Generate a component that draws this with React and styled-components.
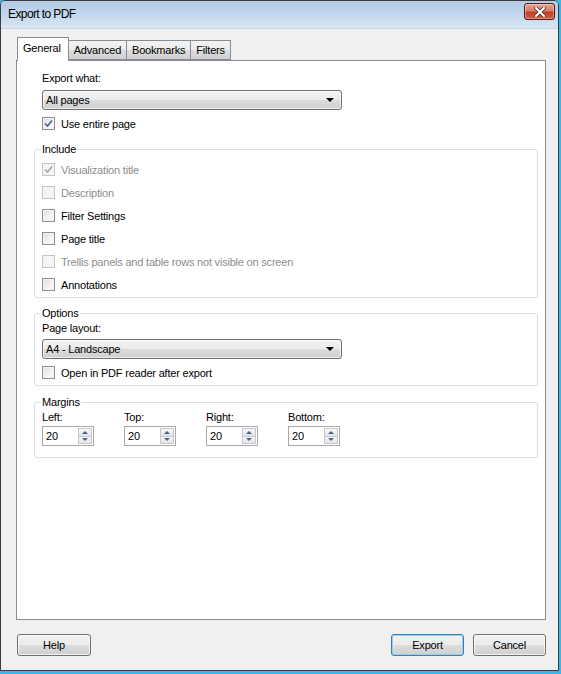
import React from "react";
import styled, { createGlobalStyle } from "styled-components";

const GlobalStyle = createGlobalStyle`
    html, body {
        margin: 0;
        padding: 0;
        background: #f0f0f0;
    }
    body {
        font-family: "Liberation Sans", Arial, sans-serif;
        font-size: 11px;
        letter-spacing: -0.2px;
        color: #000;
    }
`;

const Screen = styled.div`
    width: 561px;
    height: 674px;
    box-sizing: border-box;
    padding: 0 2px 3px 0;
    background: #3ab7e6;
`;

const Window = styled.div`
    height: 100%;
    box-sizing: border-box;
    border: 1px solid #3c3c3c;
    border-radius: 5px 5px 0 0;
    background: #f0f0f0;
    display: flex;
    flex-direction: column;
    overflow: hidden;
`;

const TitleBar = styled.div`
    height: 27px;
    flex: none;
    display: flex;
    align-items: center;
    justify-content: space-between;
    padding: 0 3px 0 7px;
    background: linear-gradient(180deg, #b3cbe6 0%, #c5d8ee 55%, #d9e6f4 100%);
    border-bottom: 1px solid #c9d6e4;
`;

const Title = styled.span`
    font-size: 12px;
    letter-spacing: -0.6px;
    color: #000;
    margin-top: -1px;
`;

const CloseButton = styled.div`
    width: 29px;
    height: 15px;
    margin-top: -6px;
    border: 1px solid #4f1a12;
    border-radius: 3px;
    display: flex;
    align-items: center;
    justify-content: center;
    background: linear-gradient(180deg, #eaa898 0%, #d97a64 45%, #c2402a 55%, #cf5e44 100%);
    box-shadow: inset 0 0 0 1px rgba(255, 255, 255, 0.35);
`;

const Body = styled.div`
    flex: 1;
    display: flex;
    flex-direction: column;
    padding: 8px 12px 0 15px;
    min-height: 0;
`;

const TabRow = styled.div`
    display: flex;
    align-items: flex-end;
    padding-left: 1px;
    position: relative;
    z-index: 1;
`;

const Tab = styled.div`
    box-sizing: border-box;
    height: ${(props) => (props.active ? "24px" : "20px")};
    padding: ${(props) => (props.active ? "0 7px 3px 5px" : "0 5px")};
    margin-bottom: ${(props) => (props.active ? "-1px" : "0")};
    margin-left: ${(props) => (props.first ? "0" : "-1px")};
    border: 1px solid #898c95;
    border-bottom: ${(props) => (props.active ? "none" : "1px solid #898c95")};
    background: ${(props) =>
        props.active ? "#fff" : "linear-gradient(180deg, #f3f3f3 0%, #ebebeb 50%, #dddddd 51%, #cfcfcf 100%)"};
    display: flex;
    align-items: center;
    white-space: nowrap;
    z-index: ${(props) => (props.active ? 2 : 1)};
`;

const Panel = styled.div`
    flex: 1;
    background: #fff;
    border: 1px solid #898c95;
    padding: 11px 7px 0 17px;
    display: flex;
    flex-direction: column;
`;

const TopSection = styled.div`
    padding-left: 8px;
    display: flex;
    flex-direction: column;
`;

const Label = styled.div`
    line-height: 13px;
    height: 13px;
    margin-top: ${(props) => props.gap || 0}px;
`;

const Select = styled.div`
    box-sizing: border-box;
    width: 300px;
    height: 20px;
    margin-top: ${(props) => props.gap || 5}px;
    border: 1px solid #707070;
    border-radius: 3px;
    background: linear-gradient(180deg, #f2f2f2 0%, #ebebeb 50%, #dddddd 51%, #cfcfcf 100%);
    display: flex;
    align-items: center;
    justify-content: space-between;
    padding: 0 7px 0 3px;
    box-shadow: inset 0 0 0 1px rgba(255, 255, 255, 0.6);
`;

const Arrow = styled.span`
    width: 0;
    height: 0;
    border-left: 4px solid transparent;
    border-right: 4px solid transparent;
    border-top: 4px solid #000;
`;

const CheckRow = styled.div`
    height: ${(props) => props.h || 23}px;
    margin-top: ${(props) => props.gap || 0}px;
    display: flex;
    align-items: center;
    gap: 6px;
    color: ${(props) => (props.disabled ? "#8d8d8d" : "#000")};
`;

const Box = styled.span`
    box-sizing: border-box;
    width: 13px;
    height: 13px;
    flex: none;
    border: 1px solid ${(props) => (props.disabled ? "#c6c6c6" : "#8e8f8f")};
    background: ${(props) =>
        props.disabled ? "#f4f4f4" : "linear-gradient(135deg, #dcdcdc 0%, #f4f4f4 60%, #fbfbfb 100%)"};
    box-shadow: inset 0 0 0 1px #f4f4f4;
    display: flex;
    align-items: center;
    justify-content: center;
`;

const Group = styled.fieldset`
    margin: ${(props) => props.gap}px 0 0 0;
    padding: 0 7px ${(props) => props.bottom}px 7px;
    border: 1px solid #d5dfe5;
    border-radius: 3px;
    min-width: 0;
`;

const Legend = styled.legend`
    padding: 0 1px;
    margin-left: -1px;
    line-height: 13px;
`;

const ListBlock = styled.div`
    padding-top: 2px;
    display: flex;
    flex-direction: column;
`;

const MarginGrid = styled.div`
    display: grid;
    grid-template-columns: repeat(4, 52px);
    column-gap: 30px;
    row-gap: 2px;
    margin-top: 2px;
`;

const Spinner = styled.div`
    box-sizing: border-box;
    width: 52px;
    height: 20px;
    border: 1px solid #a8a8a8;
    background: #fff;
    display: flex;
    align-items: stretch;
    padding: 1px;
`;

const SpinValue = styled.span`
    flex: 1;
    padding-left: 2px;
    line-height: 16px;
`;

const SpinButtons = styled.div`
    width: 14px;
    display: flex;
    flex-direction: column;
`;

const SpinButton = styled.div`
    flex: 1;
    box-sizing: border-box;
    border: 1px solid #c3c7cf;
    background: linear-gradient(180deg, #f7f7f7 0%, #e4e4e4 100%);
    display: flex;
    align-items: center;
    justify-content: center;
    & + & {
        border-top: none;
    }
`;

const SpinArrow = styled.span`
    width: 0;
    height: 0;
    border-left: 3px solid transparent;
    border-right: 3px solid transparent;
    border-bottom: ${(props) => (props.up ? "3px solid #4d6185" : "none")};
    border-top: ${(props) => (props.up ? "none" : "3px solid #4d6185")};
`;

const Footer = styled.div`
    display: flex;
    align-items: center;
    padding: 14px 12px 14px 16px;
    gap: 9px;
`;

const Spacer = styled.div`
    flex: 1;
`;

const Button = styled.div`
    box-sizing: border-box;
    width: ${(props) => props.w || 73}px;
    height: 22px;
    border: 1px solid ${(props) => (props.primary ? "#3c7fb1" : "#707070")};
    border-radius: 3px;
    background: linear-gradient(180deg, #f2f2f2 0%, #ebebeb 50%, #dddddd 51%, #cfcfcf 100%);
    box-shadow: inset 0 0 0 1px ${(props) => (props.primary ? "#8fd4f5" : "rgba(255,255,255,0.7)")};
    display: flex;
    align-items: center;
    justify-content: center;
`;

const CheckMark = ({ disabled }) => (
    <svg width="9" height="9" viewBox="0 0 9 9">
        <path
            d="M1 4.5 L3.5 7 L8 1.5"
            fill="none"
            stroke={disabled ? "#a9a9a9" : "#4a5f97"}
            strokeWidth="1.7"
        />
    </svg>
);

const Check = ({ label, checked, disabled, h, gap }) => (
    <CheckRow disabled={disabled} h={h} gap={gap}>
        <Box disabled={disabled}>{checked && <CheckMark disabled={disabled} />}</Box>
        <span>{label}</span>
    </CheckRow>
);

const includeItems = [
    { label: "Visualization title", checked: true, disabled: true },
    { label: "Description", disabled: true },
    { label: "Filter Settings" },
    { label: "Page title" },
    { label: "Trellis panels and table rows not visible on screen", disabled: true },
    { label: "Annotations" },
];

const margins = ["Left:", "Top:", "Right:", "Bottom:"];

const tabs = ["General", "Advanced", "Bookmarks", "Filters"];

export default function App() {
    return (
        <>
            <GlobalStyle />
            <Screen>
                <Window>
                    <TitleBar>
                        <Title>Export to PDF</Title>
                        <CloseButton>
                            <svg width="12" height="10" viewBox="0 0 12 10">
                                <path
                                    d="M2 1 L10 9 M10 1 L2 9"
                                    stroke="#3a3a3a"
                                    strokeWidth="3.6"
                                    strokeLinecap="square"
                                />
                                <path d="M2 1 L10 9 M10 1 L2 9" stroke="#fff" strokeWidth="2" strokeLinecap="square" />
                            </svg>
                        </CloseButton>
                    </TitleBar>
                    <Body>
                        <TabRow>
                            {tabs.map((t, i) => (
                                <Tab key={t} active={i === 0} first={i === 0}>
                                    {t}
                                </Tab>
                            ))}
                        </TabRow>
                        <Panel>
                            <TopSection>
                                <Label>Export what:</Label>
                                <Select>
                                    <span>All pages</span>
                                    <Arrow />
                                </Select>
                                <Check label="Use entire page" checked h={17} gap={5} />
                            </TopSection>

                            <Group gap={11} bottom={1}>
                                <Legend>Include</Legend>
                                <ListBlock>
                                    {includeItems.map((item) => (
                                        <Check key={item.label} {...item} />
                                    ))}
                                </ListBlock>
                            </Group>

                            <Group gap={9} bottom={4}>
                                <Legend>Options</Legend>
                                <Label gap={2}>Page layout:</Label>
                                <Select gap={4}>
                                    <span>A4 - Landscape</span>
                                    <Arrow />
                                </Select>
                                <Check label="Open in PDF reader after export" h={17} gap={5} />
                            </Group>

                            <Group gap={10} bottom={11}>
                                <Legend>Margins</Legend>
                                <MarginGrid>
                                    {margins.map((m) => (
                                        <Label key={m}>{m}</Label>
                                    ))}
                                    {margins.map((m) => (
                                        <Spinner key={m}>
                                            <SpinValue>20</SpinValue>
                                            <SpinButtons>
                                                <SpinButton>
                                                    <SpinArrow up />
                                                </SpinButton>
                                                <SpinButton>
                                                    <SpinArrow />
                                                </SpinButton>
                                            </SpinButtons>
                                        </Spinner>
                                    ))}
                                </MarginGrid>
                            </Group>
                        </Panel>
                    </Body>
                    <Footer>
                        <Button w={74}>Help</Button>
                        <Spacer />
                        <Button primary>Export</Button>
                        <Button>Cancel</Button>
                    </Footer>
                </Window>
            </Screen>
        </>
    );
}
